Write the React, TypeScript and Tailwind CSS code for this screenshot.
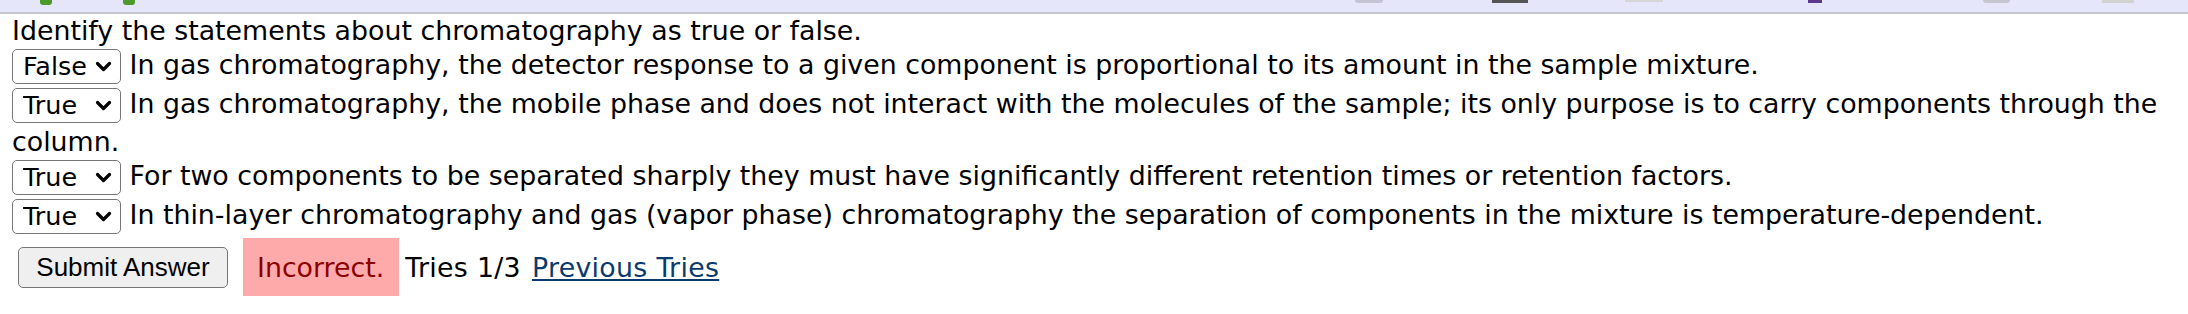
const rows = [
  {
    value: 'False',
    text: 'In gas chromatography, the detector response to a given component is proportional to its amount in the sample mixture.',
  },
  {
    value: 'True',
    text: 'In gas chromatography, the mobile phase and does not interact with the molecules of the sample; its only purpose is to carry components through the column.',
  },
  {
    value: 'True',
    text: 'For two components to be separated sharply they must have significantly different retention times or retention factors.',
  },
  {
    value: 'True',
    text: 'In thin-layer chromatography and gas (vapor phase) chromatography the separation of components in the mixture is temperature-dependent.',
  },
]

const TrueFalseSelect = ({ value }: { value: string }) => (
  <span className="relative inline-block align-middle my-[2px]">
    <select
      defaultValue={value}
      className="block appearance-none h-[35px] w-[109px] rounded-[5px] border-[1.5px] border-[#767676] bg-white pl-[10px] text-[25.5px] leading-none text-black font-['DejaVu_Sans',sans-serif]"
    >
      <option>True</option>
      <option>False</option>
    </select>
    <svg
      className="pointer-events-none absolute right-[9px] top-1/2 -translate-y-1/2"
      width="17"
      height="12"
      viewBox="0 0 17 12"
    >
      <path
        d="M2.5 2.5 L8.5 8.5 L14.5 2.5"
        stroke="black"
        strokeWidth="3.2"
        fill="none"
        strokeLinecap="round"
        strokeLinejoin="round"
      />
    </svg>
  </span>
)

export default function App() {
  return (
    <div className="w-[2188px] h-[314px] bg-white overflow-hidden">
      {/* toolbar, only its lower edge is in view */}
      <div className="h-[14px] bg-[#e6e6fa] border-b-2 border-[#c4c4cc] flex items-start overflow-hidden">
        <div className="ml-[40px] w-[12px] h-[5px] rounded-b-[3px] bg-[#4d9a2c]" />
        <div className="ml-[71px] w-[12px] h-[5px] rounded-b-[3px] bg-[#4d9a2c]" />
        <div className="ml-[1220px] w-[28px] h-[3px] rounded-b-full bg-[#c4c4d4]" />
        <div className="ml-[109px] w-[36px] h-[3px] bg-[#555555]" />
        <div className="ml-[97px] w-[38px] h-[2px] bg-[#d6d6d6]" />
        <div className="ml-[145px] w-[14px] h-[3px] bg-[#5b3a8c]" />
        <div className="ml-[161px] w-[27px] h-[3px] rounded-b-full bg-[#c6c6d0]" />
        <div className="ml-[92px] w-[32px] h-[3px] bg-[#d2d2d2]" />
      </div>

      <div className="px-[12px] text-[26.8px] leading-[33px] text-black font-['DejaVu_Sans',sans-serif]">
        <div>Identify the statements about chromatography as true or false.</div>
        {rows.map((row, i) => (
          <div key={i}>
            <TrueFalseSelect value={row.value} /> {row.text}
          </div>
        ))}

        <div className="mt-[2px] flex items-center">
          <button className="ml-[6px] h-[41px] w-[210px] rounded-[5px] border-[1.5px] border-[#767676] bg-[#efefef] text-[26px] leading-none text-black font-['Liberation_Sans',Arial,sans-serif]">
            Submit Answer
          </button>
          <span className="ml-[15px] h-[58px] flex items-center bg-[#ffaaaa] pl-[14px] pr-[15px] text-[#8b0000]">
            Incorrect.
          </span>
          <span className="ml-[6px] tracking-[0.3px]">Tries 1/3</span>
          <a href="#" className="ml-[11px] text-[#0b3a6e] underline tracking-[0.3px]">
            Previous Tries
          </a>
        </div>
      </div>
    </div>
  )
}
